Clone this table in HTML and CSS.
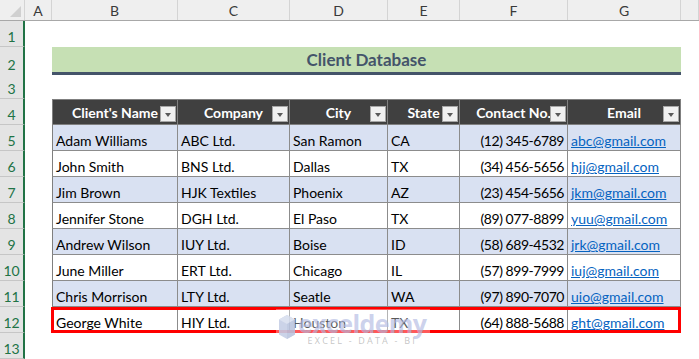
FILE: index.html
```html
<!DOCTYPE html>
<html lang="en">
<head>
    <meta charset="UTF-8">
    <meta name="viewport" content="width=device-width, initial-scale=1.0">
    <title>Client Database</title>
    <link rel="stylesheet" href="styles.css">
</head>
<body>
    <div class="sheet">
        <!-- column letters -->
        <div class="row colhead">
            <div class="corner"><span class="corner-tri"></span></div>
            <div class="ch">A</div>
            <div class="ch">B</div>
            <div class="ch">C</div>
            <div class="ch">D</div>
            <div class="ch">E</div>
            <div class="ch">F</div>
            <div class="ch">G</div>
            <div class="ch"></div>
        </div>

        <div class="row"><div class="rh">1</div></div>

        <div class="row">
            <div class="rh">2</div>
            <div class="title">Client Database</div>
        </div>

        <div class="row"><div class="rh">3</div></div>

        <div class="row">
            <div class="rh">4</div>
            <div class="a"></div>
            <div class="th first">Client's Name<span class="dd"></span></div>
            <div class="th">Company<span class="dd"></span></div>
            <div class="th">City<span class="dd"></span></div>
            <div class="th">State<span class="dd"></span></div>
            <div class="th">Contact No.<span class="dd"></span></div>
            <div class="th">Email<span class="dd"></span></div>
        </div>

        <div class="row band">
            <div class="rh">5</div>
            <div class="a"></div>
            <div class="c first">Adam Williams</div>
            <div class="c">ABC Ltd.</div>
            <div class="c">San Ramon</div>
            <div class="c">CA</div>
            <div class="c num">(12) 345-6789</div>
            <div class="c"><a class="mail" href="#">abc@gmail.com</a></div>
        </div>

        <div class="row">
            <div class="rh">6</div>
            <div class="a"></div>
            <div class="c first">John Smith</div>
            <div class="c">BNS Ltd.</div>
            <div class="c">Dallas</div>
            <div class="c">TX</div>
            <div class="c num">(34) 456-5656</div>
            <div class="c"><a class="mail" href="#">hjj@gmail.com</a></div>
        </div>

        <div class="row band">
            <div class="rh">7</div>
            <div class="a"></div>
            <div class="c first">Jim Brown</div>
            <div class="c">HJK Textiles</div>
            <div class="c">Phoenix</div>
            <div class="c">AZ</div>
            <div class="c num">(23) 454-5656</div>
            <div class="c"><a class="mail" href="#">jkm@gmail.com</a></div>
        </div>

        <div class="row">
            <div class="rh">8</div>
            <div class="a"></div>
            <div class="c first">Jennifer Stone</div>
            <div class="c">DGH Ltd.</div>
            <div class="c">El Paso</div>
            <div class="c">TX</div>
            <div class="c num">(89) 077-8899</div>
            <div class="c"><a class="mail" href="#">yuu@gmail.com</a></div>
        </div>

        <div class="row band">
            <div class="rh">9</div>
            <div class="a"></div>
            <div class="c first">Andrew Wilson</div>
            <div class="c">IUY Ltd.</div>
            <div class="c">Boise</div>
            <div class="c">ID</div>
            <div class="c num">(58) 689-4532</div>
            <div class="c"><a class="mail" href="#">jrk@gmail.com</a></div>
        </div>

        <div class="row">
            <div class="rh">10</div>
            <div class="a"></div>
            <div class="c first">June Miller</div>
            <div class="c">ERT Ltd.</div>
            <div class="c">Chicago</div>
            <div class="c">IL</div>
            <div class="c num">(57) 899-7999</div>
            <div class="c"><a class="mail" href="#">iuj@gmail.com</a></div>
        </div>

        <div class="row band">
            <div class="rh">11</div>
            <div class="a"></div>
            <div class="c first">Chris Morrison</div>
            <div class="c">LTY Ltd.</div>
            <div class="c">Seatle</div>
            <div class="c">WA</div>
            <div class="c num">(97) 890-7070</div>
            <div class="c"><a class="mail" href="#">uio@gmail.com</a></div>
        </div>

        <div class="row marked">
            <div class="rh">12</div>
            <div class="a"></div>
            <div class="c first">George White</div>
            <div class="c">HIY Ltd.</div>
            <div class="c">Houston</div>
            <div class="c">TX</div>
            <div class="c num">(64) 888-5688</div>
            <div class="c"><a class="mail" href="#">ght@gmail.com</a></div>
            <div class="mark"></div>
        </div>

        <div class="row"><div class="rh">13</div></div>

        <!-- faint site watermark over the sheet -->
        <div class="watermark">
            <svg class="wm-logo" width="18" height="26" viewBox="0 0 18 26">
                <path d="M9 1 L17 5.5 L17 20.5 L9 25 L1 20.5 L1 5.5 Z" fill="#c3cce4"/>
                <path d="M9 1 L17 5.5 L9 10 L1 5.5 Z" fill="#d6ddee"/>
                <path d="M9 10 L17 5.5 L17 20.5 L9 25 Z" fill="#b7c2de"/>
            </svg>
            <div class="wm-text">
                <div class="wm-name">exceldemy</div>
                <div class="wm-sub">EXCEL - DATA - BI</div>
            </div>
        </div>
    </div>
</body>
</html>
```

FILE: styles.css
```css
* {
    margin: 0;
    padding: 0;
    box-sizing: border-box;
}

body {
    font-family: Lato, 'Open Sans', Arial, sans-serif;
    font-size: 14px;
    color: #000;
    background: #fff;
    overflow: hidden;
}

.sheet {
    position: relative;
    width: 699px;
    height: 359px;
    overflow: hidden;
}

/* every sheet row shares the same column widths */
.row {
    display: grid;
    grid-template-columns: 25px 27px 126px 112px 98px 72px 108px 113px 1fr;
    height: 26px;
}

/* column letters */
.colhead {
    height: 21px;
    background: #efefef;
    border-bottom: 1px solid #a8a8a8;
}

.corner {
    position: relative;
    border-right: 1px solid #d4d4d4;
}

.corner-tri {
    position: absolute;
    right: 3px;
    bottom: 3px;
    width: 0;
    height: 0;
    border-left: 11px solid transparent;
    border-bottom: 11px solid #d0d0d0;
}

.ch {
    display: flex;
    align-items: center;
    justify-content: center;
    border-right: 1px solid #d4d4d4;
    color: #3a3a3a;
    font-size: 14px;
}

/* row numbers */
.rh {
    grid-column: 1;
    display: flex;
    align-items: flex-end;
    justify-content: center;
    padding-bottom: 1px;
    background: #e4e4e4;
    border-right: 2px solid #217346;
    border-bottom: 1px solid #c6c6c6;
    color: #217346;
    font-size: 14px;
}

/* title band */
.title {
    grid-column: 3 / 9;
    height: 28px;
    background: #c6e0b4;
    border-bottom: 3px solid #44546a;
    color: #44546a;
    font-size: 17px;
    font-weight: 700;
    display: flex;
    align-items: center;
    justify-content: center;
}

/* table */
.th {
    position: relative;
    background: #404040;
    color: #fff;
    font-weight: 700;
    display: flex;
    align-items: center;
    justify-content: center;
    border-right: 1px solid #7f7f7f;
    border-bottom: 1px solid #7f7f7f;
    border-top: 1px solid #7f7f7f;
    padding-top: 1px;
}

.th.first,
.c.first {
    border-left: 1px solid #7f7f7f;
}

.dd {
    position: absolute;
    right: 1px;
    bottom: 2px;
    width: 16px;
    height: 16px;
    background: #f0f0f0;
    border: 1px solid #a6a6a6;
}

.dd::after {
    content: "";
    position: absolute;
    left: 4px;
    top: 6px;
    border-left: 3.5px solid transparent;
    border-right: 3.5px solid transparent;
    border-top: 4px solid #595959;
}

.c {
    display: flex;
    align-items: flex-end;
    padding: 0 3px 1px;
    border-right: 1px solid #8c8c8c;
    border-bottom: 1px solid #8c8c8c;
    white-space: nowrap;
    overflow: hidden;
}

.band .c {
    background: #d9e1f2;
}

.c.num {
    justify-content: flex-end;
    letter-spacing: -0.45px;
}

.mail {
    color: #0563c1;
    text-decoration: underline;
}

/* highlighted row */
.marked {
    position: relative;
}

.mark {
    position: absolute;
    top: 0;
    bottom: 0;
    left: 51px;
    width: 630px;
    border: 3px solid #ff0000;
}

.watermark {
    position: absolute;
    left: 276px;
    top: 309px;
    display: flex;
    align-items: flex-start;
    gap: 2px;
    padding: 2px 4px 2px 2px;
    background: rgba(255, 255, 255, 0.35);
    pointer-events: none;
}

.wm-logo {
    margin-top: 3px;
    opacity: 0.85;
}

.wm-text {
    display: flex;
    flex-direction: column;
    align-items: center;
}

.wm-name {
    font-family: 'Open Sans', sans-serif;
    font-size: 25px;
    font-weight: 700;
    line-height: 25px;
    letter-spacing: -0.6px;
    color: rgba(175, 184, 225, 0.65);
}

.wm-sub {
    font-family: 'Open Sans', sans-serif;
    font-size: 9px;
    letter-spacing: 2.2px;
    color: rgba(165, 165, 165, 0.65);
    line-height: 10px;
}
```
